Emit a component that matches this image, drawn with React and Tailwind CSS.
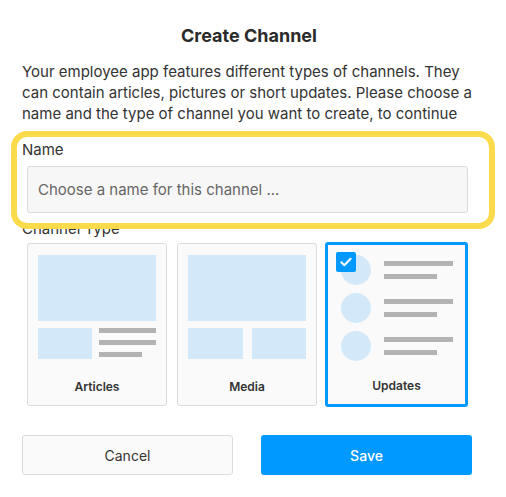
import React, { useState } from "react";

const ArticlesArt = () => (
    <div className="flex flex-col gap-[7px]">
        <div className="h-[66px] bg-[#d3e8f8]" />
        <div className="flex gap-[7px]">
            <div className="w-[54px] h-[31px] bg-[#d3e8f8]" />
            <div className="flex-1 flex flex-col gap-[7px]">
                <div className="h-[5px] bg-[#b3b3b3]" />
                <div className="h-[5px] bg-[#b3b3b3]" />
                <div className="h-[5px] w-[43px] bg-[#b3b3b3]" />
            </div>
        </div>
    </div>
)

const MediaArt = () => (
    <div className="flex flex-col gap-[7px]">
        <div className="h-[66px] bg-[#d3e8f8]" />
        <div className="flex gap-[9px]">
            <div className="flex-1 h-[31px] bg-[#d3e8f8]" />
            <div className="flex-1 h-[31px] bg-[#d3e8f8]" />
        </div>
    </div>
)

const UpdatesArt = () => (
    <div className="flex flex-col gap-[8px] pl-[3px] pr-[2px]">
        {[0, 1, 2].map((i) => (
            <div key={i} className="flex items-center gap-[13px]">
                <div className="w-[30px] h-[30px] rounded-full bg-[#d3e8f8] shrink-0" />
                <div className="flex-1 flex flex-col gap-[8px]">
                    <div className="h-[5px] bg-[#b3b3b3]" />
                    <div className="h-[5px] w-[53px] bg-[#b3b3b3]" />
                </div>
            </div>
        ))}
    </div>
)

const types = [
    { id: "articles", label: "Articles", Art: ArticlesArt },
    { id: "media", label: "Media", Art: MediaArt },
    { id: "updates", label: "Updates", Art: UpdatesArt },
]

export default function App() {
    const [name, setName] = useState("")
    const [type, setType] = useState("updates")

    return (
        <div
            className="w-[506px] h-[497px] bg-white px-[22px] text-[#333]"
            style={{ fontFamily: "Inter, 'Noto Sans', sans-serif" }}
        >
            <h1 className="pt-[24px] text-center text-[18px] leading-[24px] font-bold text-[#2b2b2b] -ml-[8px]">
                Create Channel
            </h1>

            <p className="mt-[13px] text-[15px] leading-[21px] text-[#333]">
                Your employee app features different types of channels. They can contain articles, pictures or short updates. Please choose a name and the type of channel you want to create, to continue
            </p>

            <div className="relative z-10 mt-[7px] -ml-[11px] -mr-[11px] -mb-[10px] border-[6px] border-[#fbdb4b] rounded-[16px] bg-white pl-[5px] pr-[20px] pt-[3px] pb-[10px]">
                <label className="block text-[15px] leading-[20px] text-[#333]">Name</label>
                <input
                    type="text"
                    value={name}
                    onChange={(e) => setName(e.target.value)}
                    placeholder="Choose a name for this channel ..."
                    className="mt-[6px] ml-[5px] block w-[441px] h-[47px] px-[10px] bg-[#f7f7f7] border border-[#dcdcdc] rounded-[3px] text-[15px] text-[#333] placeholder:text-[#666] outline-none"
                />
            </div>

            <div className="text-[15px] leading-[20px] text-[#333]">Channel Type</div>

            <div className="mt-[4px] ml-[5px] flex gap-[10px]">
                {types.map(({ id, label, Art }) => {
                    const active = type === id
                    return (
                        <button
                            key={id}
                            onClick={() => setType(id)}
                            className={`relative rounded-[3px] bg-[#fafafa] text-left flex flex-col ${active
                                ? "border-[3px] border-[#0099ff] -ml-[2px] -mr-[1px] w-[143px] h-[165px] -mt-[1px] px-[10px] pt-[10px]"
                                : "border border-[#dcdcdc] w-[140px] h-[163px] px-[10px] pt-[11px]"
                                }`}
                        >
                            <Art />
                            {active && (
                                <div className="absolute left-[8px] top-[7px] w-[20px] h-[20px] rounded-[2px] bg-[#0099ff] flex items-center justify-center">
                                    <svg width="14" height="14" viewBox="0 0 24 24" fill="none" stroke="white" strokeWidth="3.4" strokeLinecap="round" strokeLinejoin="round">
                                        <path d="M4 12.5l5 5L20 6.5" />
                                    </svg>
                                </div>
                            )}
                            <div className="mt-auto pb-[10px] text-center text-[12px] leading-[16px] font-semibold text-[#333]">
                                {label}
                            </div>
                        </button>
                    )
                })}
            </div>

            <div className="mt-[28px] flex gap-[28px]">
                <button className="w-[211px] h-[40px] bg-[#fafafa] border border-[#dcdcdc] rounded-[3px] text-[14px] text-[#333]">
                    Cancel
                </button>
                <button className="w-[211px] h-[40px] bg-[#0099ff] rounded-[3px] text-[14px] font-medium text-white">
                    Save
                </button>
            </div>
        </div>
    )
}
